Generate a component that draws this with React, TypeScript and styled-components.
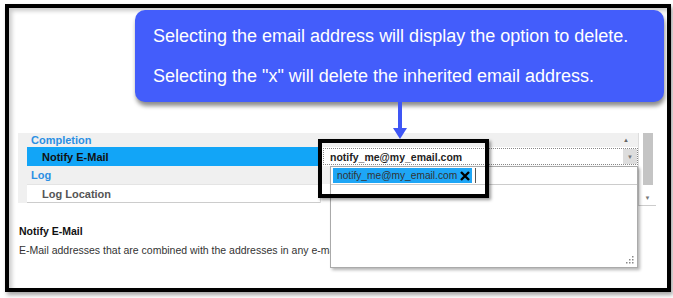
import styled, { createGlobalStyle } from "styled-components";

const GlobalStyle = createGlobalStyle`
  html, body {
    margin: 0;
    padding: 0;
    background: #fff;
  }
  body {
    width: 673px;
    height: 298px;
    overflow: hidden;
    font-family: "Liberation Sans", Arial, sans-serif;
  }
`;

const Frame = styled.div`
  position: relative;
  box-sizing: border-box;
  margin: 4px 0 0 5px;
  width: 666px;
  height: 288px;
  border: 4px solid #000;
  background: #fff;
  box-shadow: 2px 3px 4px rgba(0, 0, 0, 0.35),
    inset 3px 3px 4px rgba(0, 0, 0, 0.2);
  display: flex;
  flex-direction: column;
`;

const Callout = styled.div`
  box-sizing: border-box;
  margin: 2px 0 0 126px;
  width: 529px;
  height: 92px;
  padding: 16px 0 0 18px;
  background: #435dfb;
  border-radius: 10px;
  box-shadow: 1px 4px 4px rgba(0, 0, 0, 0.45);
  color: #fff;
  font-size: 18px;
  line-height: 20px;
  display: flex;
  flex-direction: column;
  gap: 20px;
`;

const Arrow = styled.svg`
  position: absolute;
  left: 384px;
  top: 94px;
`;

const Grid = styled.div`
  margin: 31px 0 0 9px;
  width: 638px;
  display: flex;
  font-size: 11px;
  line-height: 14px;
`;

const Rows = styled.div`
  flex: 1;
  display: flex;
  flex-direction: column;
`;

const CategoryRow = styled.div<{ $height: number }>`
  height: ${({ $height }) => $height}px;
  background: #f0f0f0;
  display: flex;
  align-items: center;
  justify-content: space-between;
  padding: 0 9px 0 13px;
  color: #2b8fe3;
  font-weight: bold;
`;

const SortMark = styled.span`
  font-size: 6px;
  color: #666;
`;

const PropertyRow = styled.div`
  height: 19px;
  display: flex;
`;

const Indent = styled.div`
  width: 9px;
  background: #f0f0f0;
`;

const NameCell = styled.div<{ $selected?: boolean }>`
  box-sizing: border-box;
  width: 293px;
  padding-left: 15px;
  display: flex;
  align-items: center;
  font-weight: bold;
  background: ${({ $selected }) => ($selected ? "#12a5f7" : "#fff")};
  color: ${({ $selected }) => ($selected ? "#111" : "#555")};
  border-bottom: 1px solid ${({ $selected }) => ($selected ? "#12a5f7" : "#ccc")};
  border-top: 1px solid ${({ $selected }) => ($selected ? "#12a5f7" : "#e4e4e4")};
`;

const ValueCell = styled.div`
  flex: 1;
  box-sizing: border-box;
  padding: 1px 0 1px 2px;
  border-left: 1px solid #ddd;
  display: flex;
`;

const Editor = styled.div`
  flex: 1;
  box-sizing: border-box;
  display: flex;
  align-items: center;
  border: 1px dotted #888;
  font-weight: bold;
  color: #222;
  padding-left: 6px;
  font-size: 10.5px;
`;

const EditorText = styled.span`
  flex: 1;
`;

const DropButton = styled.div`
  width: 14px;
  align-self: stretch;
  background: #ddd;
  color: #777;
  font-size: 6px;
  display: flex;
  align-items: center;
  justify-content: center;
`;

const Scrollbar = styled.div`
  width: 18px;
  box-sizing: border-box;
  border-left: 1px solid #ddd;
  border-bottom: 1px solid #ccc;
  padding: 0 3px;
  display: flex;
  flex-direction: column;
  align-items: center;
`;

const Thumb = styled.div`
  width: 10px;
  height: 52px;
  background: #c4c4c4;
`;

const ScrollArrow = styled.span`
  margin-top: 6px;
  font-size: 6px;
  color: #777;
`;

const Help = styled.div`
  margin: 18px 0 0 10px;
  display: flex;
  flex-direction: column;
  gap: 5px;
  font-size: 10.5px;
  line-height: 14px;
  color: #333;
`;

const HelpTitle = styled.div`
  font-weight: bold;
  color: #111;
`;

const Popup = styled.div`
  position: absolute;
  left: 321px;
  top: 158px;
  width: 308px;
  height: 102px;
  box-sizing: border-box;
  background: #fff;
  border: 1px solid #aaa;
  box-shadow: 2px 2px 3px rgba(0, 0, 0, 0.3);
  display: flex;
  flex-direction: column;
`;

const TagInput = styled.div`
  height: 18px;
  box-sizing: border-box;
  border-bottom: 1px solid #ccc;
  padding: 1px 0 0 2px;
  display: flex;
  align-items: flex-start;
  gap: 3px;
`;

const Chip = styled.span`
  height: 15px;
  box-sizing: border-box;
  padding: 0 2px 0 4px;
  background: #1ea6f6;
  color: #333;
  font-size: 10.2px;
  line-height: 15px;
  display: flex;
  align-items: center;
  gap: 3px;
`;

const Caret = styled.span`
  width: 1px;
  height: 15px;
  background: #555;
`;

const Grip = styled.svg`
  margin: auto 3px 3px auto;
`;

const Highlight = styled.div`
  position: absolute;
  left: 309px;
  top: 131px;
  width: 171px;
  height: 59px;
  box-sizing: border-box;
  border: 4px solid #000;
  box-shadow: 2px 2px 3px rgba(0, 0, 0, 0.4);
`;

export default function App() {
  return (
    <>
      <GlobalStyle />
      <Frame>
        <Callout>
          <span>Selecting the email address will display the option to delete.</span>
          <span>Selecting the "x" will delete the inherited email address.</span>
        </Callout>

        <Grid>
          <Rows>
            <CategoryRow $height={14}>
              <span>Completion</span>
              <SortMark>▲</SortMark>
            </CategoryRow>
            <PropertyRow>
              <Indent />
              <NameCell $selected>Notify E-Mail</NameCell>
              <ValueCell>
                <Editor>
                  <EditorText>notify_me@my_email.com</EditorText>
                  <DropButton>▼</DropButton>
                </Editor>
              </ValueCell>
            </PropertyRow>
            <CategoryRow $height={18}>
              <span>Log</span>
            </CategoryRow>
            <PropertyRow>
              <Indent />
              <NameCell>Log Location</NameCell>
              <ValueCell />
            </PropertyRow>
          </Rows>
          <Scrollbar>
            <Thumb />
            <ScrollArrow>▼</ScrollArrow>
          </Scrollbar>
        </Grid>

        <Help>
          <HelpTitle>Notify E-Mail</HelpTitle>
          <span>E-Mail addresses that are combined with the addresses in any e-mail notification</span>
        </Help>

        <Popup>
          <TagInput>
            <Chip>
              notify_me@my_email.com
              <svg width="10" height="10" viewBox="0 0 10 10">
                <path d="M1 1 L9 9 M9 1 L1 9" stroke="#000" strokeWidth="2.4" />
              </svg>
            </Chip>
            <Caret />
          </TagInput>
          <Grip width="9" height="9" viewBox="0 0 9 9">
            {[
              [7, 1],
              [7, 4],
              [4, 4],
              [7, 7],
              [4, 7],
              [1, 7],
            ].map(([x, y]) => (
              <rect key={`${x}-${y}`} x={x} y={y} width="1.5" height="1.5" fill="#888" />
            ))}
          </Grip>
        </Popup>

        <Highlight />

        <Arrow width="14" height="37" viewBox="0 0 14 37">
          <rect x="5" y="0" width="4" height="27" fill="#3f56f5" />
          <polygon points="0,26 14,26 7,37" fill="#3f56f5" />
        </Arrow>
      </Frame>
    </>
  );
}
